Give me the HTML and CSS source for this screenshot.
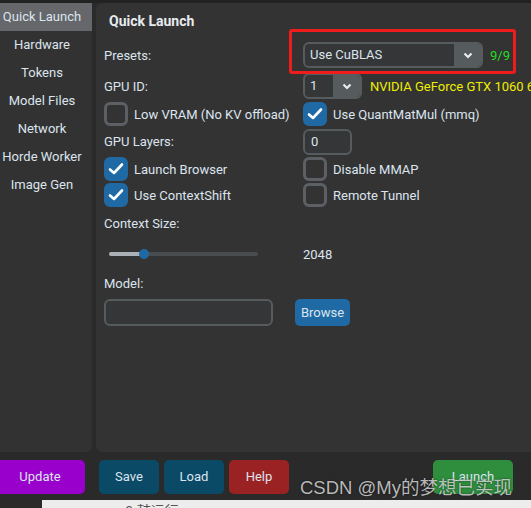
FILE: index.html
```html
<!DOCTYPE html>
<html>
<head>
<meta charset="utf-8">
<link rel="stylesheet" href="styles.css">
</head>
<body>
<div class="app">
  <div class="topbar"></div>
  <div class="panes">
    <nav class="sidebar">
      <div class="nav-item active">Quick Launch</div>
      <div class="nav-item">Hardware</div>
      <div class="nav-item">Tokens</div>
      <div class="nav-item">Model Files</div>
      <div class="nav-item">Network</div>
      <div class="nav-item">Horde Worker</div>
      <div class="nav-item">Image Gen</div>
    </nav>
    <main class="main">
      <div class="title">Quick Launch</div>

      <div class="label">Presets:</div>
      <div class="cell">
        <div class="combo combo-wide"><span class="combo-text">Use CuBLAS</span><span class="combo-btn"><svg width="10" height="7" viewBox="0 0 10 7"><polyline points="1.5,1.5 5,5 8.5,1.5" fill="none" stroke="#e8ecef" stroke-width="2.2"/></svg></span></div>
        <span class="green">9/9</span>
      </div>

      <div class="label">GPU ID:</div>
      <div class="cell">
        <div class="combo combo-small"><span class="combo-text">1</span><span class="combo-btn"><svg width="10" height="7" viewBox="0 0 10 7"><polyline points="1.5,1.5 5,5 8.5,1.5" fill="none" stroke="#e8ecef" stroke-width="2.2"/></svg></span></div>
        <span class="yellow">NVIDIA GeForce GTX 1060 6GB</span>
      </div>

      <div class="cell"><span class="box"></span><span class="cb-label">Low VRAM (No KV offload)</span></div>
      <div class="cell"><span class="box checked"><svg width="16" height="14" viewBox="0 0 16 14"><polyline points="2,7.5 6,11 14,2.5" fill="none" stroke="#fff" stroke-width="2.6" stroke-linecap="round" stroke-linejoin="round"/></svg></span><span class="cb-label">Use QuantMatMul (mmq)</span></div>

      <div class="label">GPU Layers:</div>
      <div class="cell"><div class="entry entry-small">0</div></div>

      <div class="cell"><span class="box checked"><svg width="16" height="14" viewBox="0 0 16 14"><polyline points="2,7.5 6,11 14,2.5" fill="none" stroke="#fff" stroke-width="2.6" stroke-linecap="round" stroke-linejoin="round"/></svg></span><span class="cb-label">Launch Browser</span></div>
      <div class="cell"><span class="box"></span><span class="cb-label">Disable MMAP</span></div>

      <div class="cell"><span class="box checked"><svg width="16" height="14" viewBox="0 0 16 14"><polyline points="2,7.5 6,11 14,2.5" fill="none" stroke="#fff" stroke-width="2.6" stroke-linecap="round" stroke-linejoin="round"/></svg></span><span class="cb-label">Use ContextShift</span></div>
      <div class="cell"><span class="box"></span><span class="cb-label">Remote Tunnel</span></div>

      <div class="label span2">Context Size:</div>

      <div class="cell">
        <div class="slider">
          <div class="slider-fill" style="width: 35px"></div>
          <div class="slider-knob" style="left: 30px"></div>
        </div>
      </div>
      <div class="label">2048</div>

      <div class="label span2">Model:</div>

      <div class="cell span2 model-row">
        <div class="entry entry-model"></div>
        <div class="btn-browse">Browse</div>
      </div>
    </main>
  </div>
  <footer class="footer">
    <div class="btn btn-update">Update</div>
    <div class="btn btn-save">Save</div>
    <div class="btn btn-load">Load</div>
    <div class="btn btn-help">Help</div>
    <div class="btn btn-launch">Launch</div>
  </footer>
  <div class="under"><span class="under-dark"></span><span class="under-text">6.鼓运行</span></div>
</div>
<div class="annot"></div>
<div class="watermark">CSDN @My的梦想已实现</div>
</body>
</html>
```

FILE: styles.css
```css
* { box-sizing: border-box; }
html, body {
  margin: 0;
  padding: 0;
  width: 531px;
  height: 508px;
  overflow: hidden;
  background: #2a2a2a;
  font-family: Roboto, "Liberation Sans", sans-serif;
  font-size: 13px;
  color: #dce4ee;
}
.app {
  position: relative;
  width: 531px;
  height: 508px;
  display: flex;
  flex-direction: column;
}
.topbar {
  height: 3px;
  background: #222222;
  flex: none;
}
.panes {
  height: 449px;
  flex: none;
  display: flex;
  gap: 4px;
  overflow: hidden;
}
.sidebar {
  width: 92px;
  flex: none;
  background: #323232;
  border-bottom-right-radius: 6px;
  display: flex;
  flex-direction: column;
}
.nav-item {
  height: 28px;
  line-height: 28px;
  text-align: center;
  white-space: nowrap;
  padding-right: 8px;
}
.nav-item.active {
  background: #65676b;
}
.main {
  flex: none;
  width: 450px;
  background: #333333;
  border-radius: 6px;
  padding-left: 8px;
  display: grid;
  grid-template-columns: 199px 1fr;
  grid-template-rows: 35px 34px 28px 28px 27px 28px 24px 32px 30px 28px 31px;
  align-items: center;
  align-content: start;
}
.title {
  grid-column: 1 / span 2;
  font-size: 14px;
  font-weight: bold;
  padding-left: 5px;
  color: #e6ebf0;
}
.label { white-space: nowrap; }
.span2 { grid-column: 1 / span 2; }
.cell {
  display: flex;
  align-items: center;
  white-space: nowrap;
}
.combo {
  height: 26px;
  display: flex;
  border: 2px solid #565b5e;
  border-radius: 6px;
  background: #343638;
  overflow: hidden;
}
.combo-wide { width: 180px; }
.combo-small { width: 59px; }
.combo-text {
  flex: 1;
  padding-left: 5px;
  line-height: 22px;
}
.combo-btn {
  width: 27px;
  background: #565b5e;
  display: flex;
  align-items: center;
  justify-content: center;
}
.green { color: #22dd22; margin-left: 7px; }
.yellow { color: #eeee00; margin-left: 8px; }
.box {
  width: 24px;
  height: 24px;
  flex: none;
  border: 3px solid #5c6064;
  border-radius: 6px;
  display: flex;
  align-items: center;
  justify-content: center;
}
.box.checked {
  background: #1f6aa5;
  border-color: #1f6aa5;
}
.cb-label { margin-left: 6px; }
.entry {
  height: 26px;
  border: 2px solid #565b5e;
  border-radius: 6px;
  background: #343638;
  padding-left: 6px;
  line-height: 22px;
}
.entry-small { width: 49px; }
.slider {
  position: relative;
  width: 149px;
  height: 4px;
  margin-left: 5px;
  border-radius: 2px;
  background: #4a4d50;
}
.slider-fill {
  height: 4px;
  border-radius: 2px;
  background: #aab0b5;
}
.slider-knob {
  position: absolute;
  top: -3px;
  width: 10px;
  height: 10px;
  border-radius: 50%;
  background: #1f6aa5;
}
.model-row { gap: 22px; }
.entry-model { width: 169px; height: 27px; }
.btn-browse {
  width: 55px;
  height: 27px;
  line-height: 27px;
  border-radius: 5px;
  background: #1f6aa5;
  text-align: center;
}
.footer {
  height: 48px;
  flex: none;
  display: flex;
  align-items: flex-start;
  padding-top: 8px;
  padding-right: 18px;
  background: #2a2a2a;
}
.btn {
  height: 34px;
  line-height: 34px;
  border-radius: 5px;
  text-align: center;
  flex: none;
}
.btn-update { width: 90px; margin-left: -5px; background: #9900cc; }
.btn-save { width: 60px; margin-left: 14px; background: #0a4a66; }
.btn-load { width: 60px; margin-left: 5px; background: #0a4a66; }
.btn-help { width: 60px; margin-left: 5px; background: #9b2222; }
.btn-launch { width: 80px; margin-left: auto; background: #2e8e3e; }
.under {
  height: 8px;
  flex: none;
  display: flex;
  overflow: hidden;
  background: #ededed;
}
.under-dark {
  width: 42px;
  background: #2a2a2a;
  flex: none;
}
.under-text {
  margin-left: 83px;
  padding-top: 3px;
  font-family: "Liberation Sans", "Noto Sans CJK SC", sans-serif;
  font-size: 14px;
  line-height: 16px;
  color: #555555;
}
.annot {
  position: absolute;
  left: 289px;
  top: 29px;
  width: 227px;
  height: 45px;
  border: 3px solid #f01c1c;
  border-radius: 3px;
}
.watermark {
  position: absolute;
  left: 300px;
  top: 476px;
  font-family: "Liberation Sans", "Noto Sans CJK SC", sans-serif;
  font-size: 18.5px;
  line-height: 24px;
  white-space: nowrap;
  color: rgba(215, 215, 215, 0.85);
  text-shadow: 0 0 2px rgba(0, 0, 0, 0.6);
}
```
